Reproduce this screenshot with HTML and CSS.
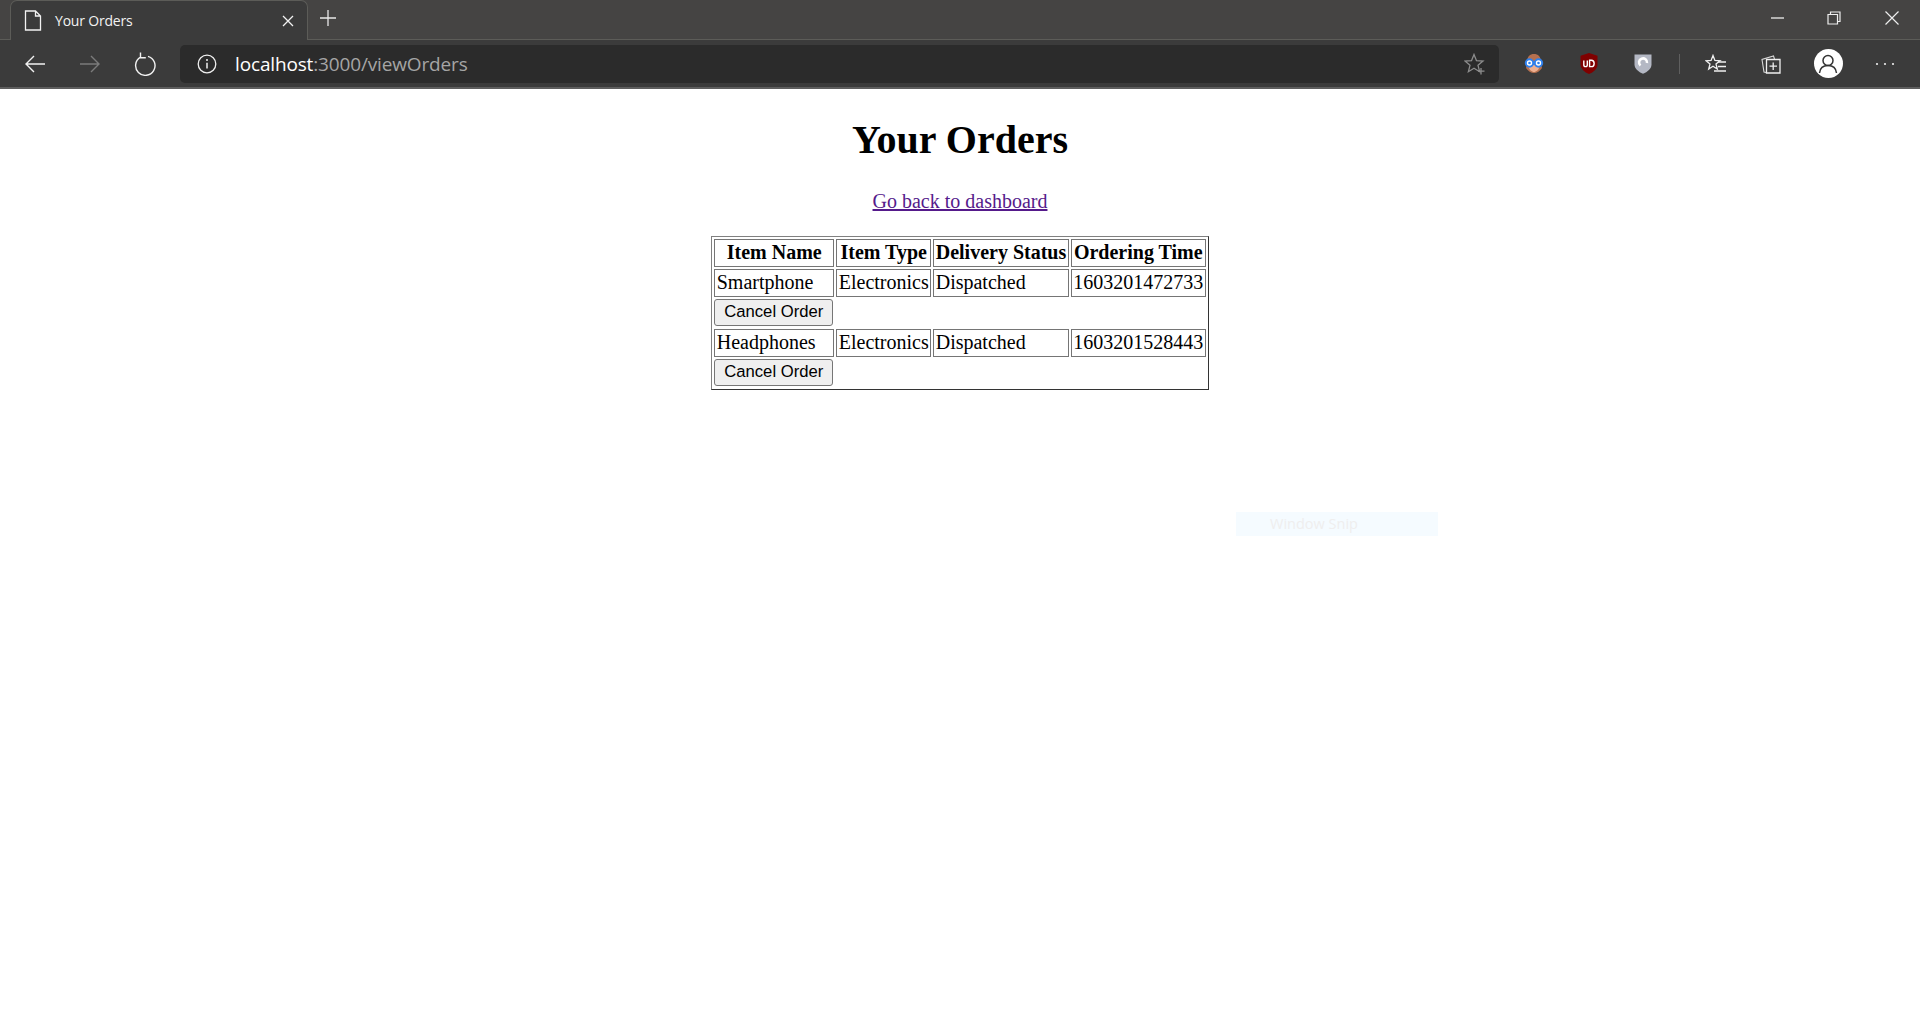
FILE: index.html
```html
<!DOCTYPE html>
<html lang="en">
<head>
<meta charset="utf-8">
<title>Your Orders</title>
<link rel="stylesheet" href="styles.css">
</head>
<body>
<header class="browser">
  <div class="tabstrip">
    <div class="tab">
      <svg class="tab-doc" width="18" height="21" viewBox="0 0 18 21"><path d="M1.500 1h10l5 5v14h-15zM11.500 1v5h5" fill="none" stroke="#f2f2f2" stroke-width="1.300"/></svg>
      <span class="tab-title">Your Orders</span>
      <svg class="tab-close" width="12" height="12" viewBox="0 0 12 12"><path d="M1 1l10 10M11 1L1 11" stroke="#f2f2f2" stroke-width="1.300"/></svg>
    </div>
    <svg class="new-tab" width="16" height="16" viewBox="0 0 16 16"><path d="M8 0v16M0 8h16" stroke="#e8e8e8" stroke-width="1.300"/></svg>
    <div class="window-controls">
      <div class="win-btn"><svg width="14" height="14" viewBox="0 0 14 14"><path d="M0 7h13" stroke="#eee" stroke-width="1.300"/></svg></div>
      <div class="win-btn"><svg width="14" height="14" viewBox="0 0 14 14"><path d="M1 3.500h9.500V13H1zM3.500 3.500V1H13v9.500h-2.500" fill="none" stroke="#eee" stroke-width="1.200"/></svg></div>
      <div class="win-btn"><svg width="14" height="14" viewBox="0 0 14 14"><path d="M.5.5l13 13M13.500.5l-13 13" stroke="#eee" stroke-width="1.200"/></svg></div>
    </div>
  </div>
  <div class="toolbar">
    <div class="tool"><svg width="22" height="18" viewBox="0 0 22 18"><path d="M21 9H2M10 1L2 9l8 8" fill="none" stroke="#f2f2f2" stroke-width="1.400"/></svg></div>
    <div class="tool"><svg width="22" height="18" viewBox="0 0 22 18"><path d="M1 9h19M12 1l8 8-8 8" fill="none" stroke="#7b7b7b" stroke-width="1.400"/></svg></div>
    <div class="tool"><svg width="22" height="24" viewBox="0 0 22 24"><path d="M6.500 5.200A9.700 9.700 0 1 0 14 4.300M6.500 0.500v5.200h5.300" fill="none" stroke="#f2f2f2" stroke-width="1.400"/></svg></div>
    <div class="address">
      <svg class="info" width="20" height="20" viewBox="0 0 20 20"><circle cx="10" cy="10" r="8.800" fill="none" stroke="#f0f0f0" stroke-width="1.300"/><path d="M10 8.800v5.700" stroke="#f0f0f0" stroke-width="1.500"/><circle cx="10" cy="6" r="1" fill="#f0f0f0"/></svg>
      <span class="url"><span class="host">localhost</span>:3000/viewOrders</span>
      <svg class="star" width="22" height="22" viewBox="0 0 22 22"><path d="M10 1.500l2.500 6.200 6.500.4-5 4.200 1.600 6.400-5.600-3.500-5.600 3.500 1.600-6.400-5-4.200 6.500-.4z" fill="none" stroke="#8d8d8d" stroke-width="1.300"/><path d="M17 15v6.500M14 18.200h6.500" stroke="#8d8d8d" stroke-width="1.300"/></svg>
    </div>
    <div class="tool ext">
      <svg width="20" height="21" viewBox="0 0 20 21"><path d="M3 10C3 3 6 1 10 1s7 2 7 9l1 5c-2 3-5 5-8 5s-6-2-8-5z" fill="#b5704f"/><path d="M4 12c1 5 4 7 6 7s5-2 6-7z" fill="#eeb091"/><circle cx="5.500" cy="10" r="3.700" fill="#fff" stroke="#2f80ed" stroke-width="2"/><circle cx="14.500" cy="10" r="3.700" fill="#fff" stroke="#2f80ed" stroke-width="2"/><circle cx="5.500" cy="10" r="1.300" fill="#2f80ed"/><circle cx="14.500" cy="10" r="1.300" fill="#2f80ed"/></svg>
    </div>
    <div class="tool">
      <svg width="18" height="21" viewBox="0 0 18 21"><path d="M9 0l8.500 2.700v8.500c0 4.500-4 8-8.500 9.800C4.500 19.200.5 15.700.5 11.200V2.700z" fill="#800000"/><path d="M3.800 7.500v4.200c0 2.500 3.500 2.500 3.500 0V7.500M9.600 7.200h1.700c3.800 0 3.800 6.400 0 6.400H9.600z" fill="none" stroke="#fff" stroke-width="1.400"/></svg>
    </div>
    <div class="tool shield">
      <svg width="18" height="21" viewBox="0 0 18 21"><path d="M.5 1.500h17v10c0 4-4 7.500-8.500 9.300C4.500 19 .5 15.500.5 11.500z" fill="#b4b8c4"/><path d="M6.500 12.500a4 4 0 1 1 6.500-2.500" fill="none" stroke="#fff" stroke-width="2.600"/></svg>
    </div>
    <div class="divider"></div>
    <div class="tool">
      <svg width="22" height="20" viewBox="0 0 22 20"><path d="M8 1.500l1.900 5 5.100.3-4 3.200 1.300 5-4.300-2.800-4.300 2.800 1.300-5-4-3.200 5.100-.3z" fill="none" stroke="#f0f0f0" stroke-width="1.300"/><path d="M13 8h8M13 12.500h8M9 17h12" stroke="#f0f0f0" stroke-width="1.300"/></svg>
    </div>
    <div class="tool">
      <svg width="20" height="20" viewBox="0 0 20 20"><path d="M5 18.500L3 18 1 5.500 12.500 2l1 3" fill="none" stroke="#d8d8d8" stroke-width="1.100"/><path d="M5.500 5.500h13.500v13.500H5.500zM12.200 8.500v7.500M8.500 12.200H16" fill="none" stroke="#f0f0f0" stroke-width="1.300"/></svg>
    </div>
    <div class="tool avatar-tool">
      <div class="avatar"><svg width="20" height="20" viewBox="0 0 20 20"><circle cx="10" cy="6.500" r="5" fill="none" stroke="#333" stroke-width="1.500"/><path d="M1.500 19c.5-5 4-7.500 8.500-7.500S18 14 18.500 19" fill="none" stroke="#333" stroke-width="1.500"/></svg></div>
    </div>
    <div class="tool more">
      <svg width="20" height="4" viewBox="0 0 20 4"><circle cx="2" cy="2" r="1.100" fill="#eee"/><circle cx="10" cy="2" r="1.100" fill="#eee"/><circle cx="18" cy="2" r="1.100" fill="#eee"/></svg>
    </div>
  </div>
</header>
<main class="page">
  <h1 class="title">Your Orders</h1>
  <a class="back-link" href="#">Go back to dashboard</a>
  <table class="orders">
    <thead>
      <tr><th>Item Name</th><th>Item Type</th><th>Delivery Status</th><th>Ordering Time</th></tr>
    </thead>
    <tbody>
      <tr><td>Smartphone</td><td>Electronics</td><td>Dispatched</td><td>1603201472733</td></tr>
      <tr class="action-row"><td><button class="cancel" type="button">Cancel Order</button></td><td></td><td></td><td></td></tr>
      <tr><td>Headphones</td><td>Electronics</td><td>Dispatched</td><td>1603201528443</td></tr>
      <tr class="action-row"><td><button class="cancel" type="button">Cancel Order</button></td><td></td><td></td><td></td></tr>
    </tbody>
  </table>
</main>
<div class="snip"><span>Window Snip</span></div>
</body>
</html>
```

FILE: styles.css
```css
html, body {
  margin: 0;
  padding: 0;
  background: #fff;
}
body {
  height: 1030px;
  overflow: hidden;
  font-family: "Liberation Serif", serif;
  font-size: 20px;
  color: #000;
}
.browser {
  font-family: "Open Sans", "Noto Sans", sans-serif;
  background: #3b3b3b;
  border-bottom: 2px solid #5e5e5e;
  box-sizing: content-box;
}
.tabstrip {
  display: flex;
  align-items: flex-start;
  height: 39px;
  background: #454443;
  border-bottom: 1px solid #5c5c58;
  box-sizing: content-box;
  padding-left: 10px;
}
.tab {
  display: flex;
  align-items: center;
  width: 298px;
  height: 40px;
  box-sizing: border-box;
  background: #3b3b3b;
  border: 1px solid #5c5c58;
  border-bottom: none;
  border-radius: 7px 7px 0 0;
  padding: 0 13px 0 13px;
  color: #f2f2f2;
}
.tab-title {
  flex: 1;
  margin-left: 13px;
  font-size: 14px;
  letter-spacing: -0.2px;
}
.new-tab {
  margin: 10px 0 0 12px;
}
.window-controls {
  display: flex;
  margin-left: auto;
}
.win-btn {
  width: 57px;
  height: 36px;
  display: flex;
  align-items: center;
  justify-content: center;
}
.win-btn:nth-child(2) {
  margin-left: -1px;
  margin-right: 1px;
}
.toolbar {
  display: flex;
  align-items: center;
  height: 47px;
  padding-left: 7.5px;
}
.tool {
  flex: none;
  width: 55px;
  height: 38px;
  display: flex;
  align-items: center;
  justify-content: center;
}
.address {
  flex: none;
  width: 1319px;
  height: 38px;
  margin: 0 7.5px;
  background: #2b2b2b;
  border-radius: 5px;
  display: flex;
  align-items: center;
  padding: 0 13px 0 17px;
  box-sizing: border-box;
}
.url {
  flex: 1;
  margin-left: 18px;
  font-size: 19px;
  letter-spacing: -0.15px;
  color: #a5a5a5;
}
.host {
  color: #fff;
}
.shield {
  margin-left: -1.5px;
}
.divider {
  flex: none;
  width: 1px;
  height: 20px;
  background: #5f5f5f;
  margin: 0 8px 0 9px;
}
.avatar-tool {
  margin-left: 2.5px;
}
.more {
  margin-left: 1.5px;
}
.avatar {
  width: 29px;
  height: 29px;
  border-radius: 50%;
  background: #fff;
  display: flex;
  align-items: center;
  justify-content: center;
}
.page {
  text-align: center;
}
.title {
  margin: 0;
  padding: 27.500px 0 27px;
  font-size: 40px;
  line-height: 46px;
  font-weight: bold;
}
.back-link {
  display: block;
  width: max-content;
  margin: 0 auto 23.500px;
  line-height: 23px;
  color: #551a8b;
  text-decoration: underline;
}
.orders {
  margin: 0 auto;
  border-collapse: separate;
  border-spacing: 2px;
  border: 1px solid;
  border-color: #808080 #333 #333 #808080;
}
.orders th,
.orders td {
  border: 1px solid #757575;
  padding: 1px 1.5px 2px;
  line-height: 23px;
  text-align: left;
}
.orders th {
  text-align: center;
  font-weight: bold;
}
.orders .action-row td {
  border: none;
  padding: 0 1px 0 0;
  height: 28px;
  vertical-align: top;
}
.cancel {
  display: block;
  font-family: "Liberation Sans", Arial, sans-serif;
  font-size: 16.67px;
  line-height: 19px;
  white-space: nowrap;
  color: #000;
  background: #efefef;
  border: 1.25px solid #767676;
  border-radius: 3px;
  padding: 0 9px 2px;
  width: 119px;
  height: 27px;
  box-sizing: border-box;
}
.snip {
  position: absolute;
  left: 1236px;
  top: 512px;
  width: 202px;
  height: 24px;
  background: #f5fbff;
  font-family: "Open Sans", "Noto Sans", sans-serif;
  font-size: 14.5px;
  line-height: 24px;
  color: #efeeee;
  padding-left: 34px;
  box-sizing: border-box;
}
```
